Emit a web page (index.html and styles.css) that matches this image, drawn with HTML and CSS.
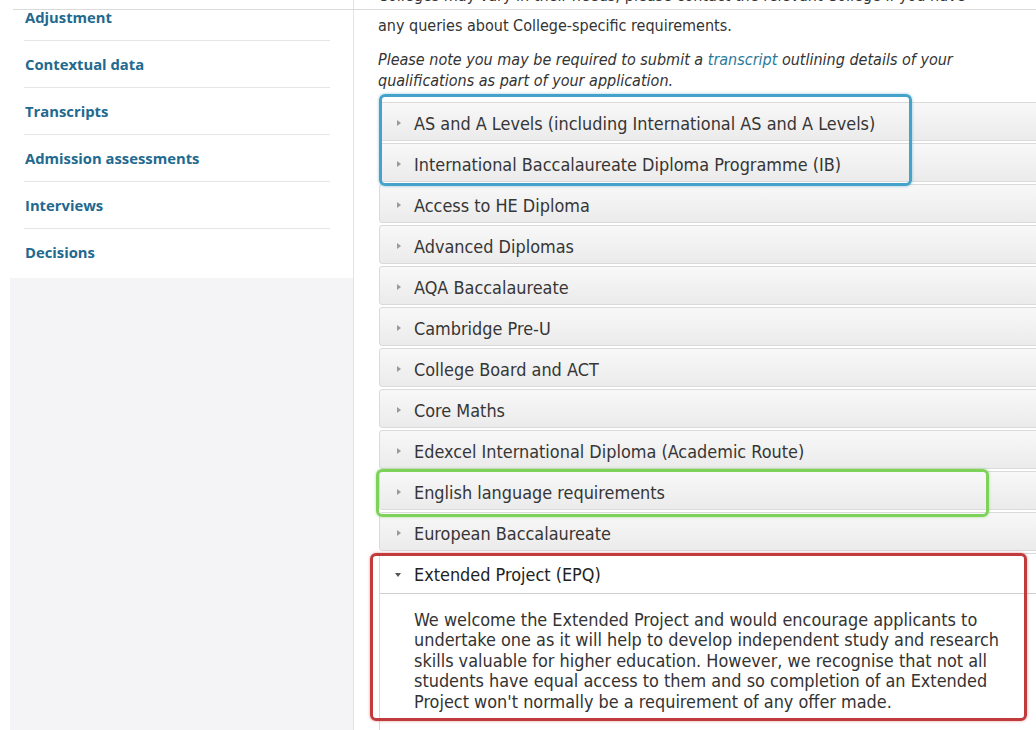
FILE: index.html
```html
<!DOCTYPE html>
<html lang="en">
<head>
<meta charset="utf-8">
<title>Qualifications</title>
<link rel="stylesheet" href="styles.css">
</head>
<body>
<div class="page">
  <aside class="sidebar">
    <ul class="sidenav">
      <li><a href="#">Adjustment</a></li>
      <li><a href="#">Contextual data</a></li>
      <li><a href="#">Transcripts</a></li>
      <li><a href="#">Admission assessments</a></li>
      <li><a href="#">Interviews</a></li>
      <li><a href="#">Decisions</a></li>
    </ul>
  </aside>
  <main class="content">
    <p class="cutline">Colleges may vary in their needs; please contact the relevant College if you have</p>
    <p class="intro">any queries about College-specific requirements.</p>
    <p class="note"><em>Please note you may be required to submit a <a href="#">transcript</a> outlining details of your<br>qualifications as part of your application.</em></p>
    <div class="accordion">
      <div class="acc-row"><span class="caret"></span>AS and A Levels (including International AS and A Levels)</div>
      <div class="acc-row"><span class="caret"></span>International Baccalaureate Diploma Programme (IB)</div>
      <div class="acc-row"><span class="caret"></span>Access to HE Diploma</div>
      <div class="acc-row"><span class="caret"></span>Advanced Diplomas</div>
      <div class="acc-row"><span class="caret"></span>AQA Baccalaureate</div>
      <div class="acc-row"><span class="caret"></span>Cambridge Pre-U</div>
      <div class="acc-row"><span class="caret"></span>College Board and ACT</div>
      <div class="acc-row"><span class="caret"></span>Core Maths</div>
      <div class="acc-row"><span class="caret"></span>Edexcel International Diploma (Academic Route)</div>
      <div class="acc-row"><span class="caret"></span>English language requirements</div>
      <div class="acc-row"><span class="caret"></span>European Baccalaureate</div>
      <div class="acc-panel">
        <div class="acc-head"><span class="caret-down"></span>Extended Project (EPQ)</div>
        <div class="acc-body">
          <p>We welcome the Extended Project and would encourage applicants to<br>undertake one as it will help to develop independent study and research<br>skills valuable for higher education. However, we recognise that not all<br>students have equal access to them and so completion of an Extended<br>Project won't normally be a requirement of any offer made.</p>
        </div>
      </div>
    </div>
  </main>
</div>
<div class="topline"></div>
<div class="mark mark-blue"></div>
<div class="mark mark-green"></div>
<div class="mark mark-red"></div>
</body>
</html>
```

FILE: styles.css
```css
html, body {
  margin: 0;
  padding: 0;
  overflow: hidden;
  background: #ffffff;
}
body {
  position: relative;
  width: 1036px;
  height: 730px;
  font-family: "DejaVu Sans Condensed", "DejaVu Sans", sans-serif;
  font-size: 16px;
  color: #333333;
}
.page {
  display: flex;
  align-items: stretch;
  margin-top: -6px;
  padding-left: 10px;
  min-height: 760px;
}
.sidebar {
  flex: 0 0 344px;
  box-sizing: border-box;
  background: #f4f4f6;
  border-right: 1px solid #e3e3e6;
}
.sidenav {
  list-style: none;
  margin: 0;
  padding: 0 23px 3px 14px;
  background: #ffffff;
  font-family: "Open Sans", sans-serif;
  font-weight: 700;
  font-size: 14.8px;
}
.sidenav li {
  height: 46px;
  border-bottom: 1px solid #e6e6e6;
  display: flex;
  align-items: center;
  padding-left: 1px;
}
.sidenav li:last-child {
  border-bottom: none;
}
.sidenav a {
  color: #21698f;
  text-decoration: none;
}
.content {
  flex: 0 0 700px;
  padding-left: 24px;
  white-space: nowrap;
}
.content p {
  margin: 0;
}
.cutline {
  margin-top: -7px !important;
  height: 18px;
  line-height: 18px;
}
.intro {
  margin-top: 10px !important;
  line-height: 21px;
}
.note {
  margin-top: 13px !important;
  line-height: 21px;
}
.note a {
  color: #2b7a9b;
  text-decoration: none;
}
.accordion {
  margin-top: 11px;
  margin-left: 1px;
  font-size: 17.9px;
}
.acc-row {
  height: 34px;
  padding-top: 3px;
  box-sizing: content-box;
  border: 1px solid #dadada;
  border-radius: 3px;
  margin-bottom: 2px;
  background: linear-gradient(#f8f8f8, #ebebeb);
  display: flex;
  align-items: center;
  padding-left: 17px;
  color: #363636;
}
.caret {
  width: 0;
  height: 0;
  border-left: 4px solid #9a9a9a;
  border-top: 3.5px solid transparent;
  border-bottom: 3.5px solid transparent;
  margin-right: 13px;
}
.acc-panel {
  border: 1px solid #d9d9d9;
  border-radius: 3px;
  background: #ffffff;
}
.acc-head {
  height: 37px;
  padding-top: 2px;
  border-bottom: 1px solid #cfcfcf;
  display: flex;
  align-items: center;
  padding-left: 15px;
  color: #222222;
}
.caret-down {
  width: 0;
  height: 0;
  border-top: 4px solid #555555;
  border-left: 3.5px solid transparent;
  border-right: 3.5px solid transparent;
  margin-right: 13px;
}
.acc-body {
  padding: 16px 20px 30px 34px;
  line-height: 20.4px;
}
.topline {
  position: absolute;
  top: 9px;
  left: 13px;
  right: 0;
  height: 1px;
  background: #dadada;
}
.mark {
  position: absolute;
  box-sizing: border-box;
  border: 3px solid;
  border-radius: 6px;
  pointer-events: none;
}
.mark-blue {
  left: 379px;
  top: 94px;
  width: 533px;
  height: 92px;
  border-color: #45a2cb;
  box-shadow: 0 0 3px rgba(69, 162, 203, 0.6);
}
.mark-green {
  left: 376px;
  top: 469px;
  width: 613px;
  height: 48px;
  border-color: #7dd35a;
  box-shadow: 0 0 3px rgba(125, 211, 90, 0.6);
}
.mark-red {
  left: 370px;
  top: 553px;
  width: 657px;
  height: 168px;
  border-color: #c13a3c;
  box-shadow: 0 0 3px rgba(193, 58, 60, 0.5);
}
```
